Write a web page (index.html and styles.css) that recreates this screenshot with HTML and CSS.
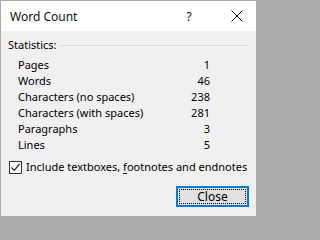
FILE: index.html
```html
<!DOCTYPE html>
<html>
<head>
<meta charset="utf-8">
<link rel="stylesheet" href="styles.css">
</head>
<body>
<div class="dialog">
  <div class="titlebar">
    <span class="title">Word Count</span>
    <span class="help">?</span>
    <span class="close-x">
      <svg width="12" height="12" viewBox="0 0 12 12"><path d="M0.5 0.5 L11.5 11.5 M11.5 0.5 L0.5 11.5" stroke="#111" stroke-width="1" fill="none"/></svg>
    </span>
  </div>
  <div class="content">
    <div class="section-head"><span>Statistics:</span><span class="rule"></span></div>
    <div class="stats">
      <div class="row"><span>Pages</span><span class="num">1</span></div>
      <div class="row"><span>Words</span><span class="num">46</span></div>
      <div class="row"><span>Characters (no spaces)</span><span class="num">238</span></div>
      <div class="row"><span>Characters (with spaces)</span><span class="num">281</span></div>
      <div class="row"><span>Paragraphs</span><span class="num">3</span></div>
      <div class="row"><span>Lines</span><span class="num">5</span></div>
    </div>
    <div class="check-row">
      <span class="checkbox"><svg width="11" height="11" viewBox="0 0 11 11"><path d="M1.5 5.5 L4.2 8.3 L9.5 2" stroke="#222" stroke-width="1.2" fill="none"/></svg></span>
      <span class="check-label">Include textboxes, <u>f</u>ootnotes and endnotes</span>
    </div>
    <div class="actions">
      <button class="btn"><span class="focus">Close</span></button>
    </div>
  </div>
</div>
</body>
</html>
```

FILE: styles.css
```css
html, body {
  margin: 0;
  padding: 0;
}
body {
  width: 258px;
  height: 218px;
  background: #aaaaaa;
  font-family: "Noto Sans", "Open Sans", sans-serif;
  font-size: 11px;
  color: #000;
  overflow: hidden;
}
.dialog {
  margin: 1px 2px 0 1px;
  height: 215px;
  display: flex;
  flex-direction: column;
  background: #f0f0f0;
}
.titlebar {
  height: 30px;
  background: #fff;
  display: flex;
  align-items: center;
  padding-left: 9px;
}
.title {
  flex: 1;
  font-size: 12px;
  color: #111;
}
.help {
  width: 12px;
  margin-right: 36px;
  text-align: center;
  font-size: 12px;
  color: #111;
}
.close-x {
  display: flex;
  margin-right: 13px;
}
.content {
  flex: 1;
  padding: 6px 7px 0 7px;
  display: flex;
  flex-direction: column;
}
.section-head {
  height: 16px;
  line-height: 16px;
  display: flex;
  align-items: center;
  white-space: nowrap;
}
.rule {
  flex: 1;
  height: 1px;
  background: #dcdcdc;
  margin-left: 3px;
}
.stats {
  margin-top: 4px;
  margin-left: 10px;
  width: 192px;
}
.row {
  height: 16px;
  line-height: 16px;
  display: flex;
  justify-content: space-between;
  white-space: nowrap;
}
.check-row {
  margin-top: 6px;
  height: 16px;
  display: flex;
  align-items: center;
  white-space: nowrap;
}
.checkbox {
  flex: none;
  width: 11px;
  height: 11px;
  border: 1px solid #333;
  background: #fff;
  display: flex;
  margin-left: 1px;
}
.check-label {
  margin-left: 4px;
  line-height: 16px;
}
.check-label u {
  text-underline-offset: 2px;
}
.actions {
  margin-top: 11px;
  display: flex;
  justify-content: flex-end;
}
.btn {
  width: 73px;
  height: 21px;
  border: 2px solid #0078d7;
  background: #e1e1e1;
  padding: 1px;
  margin: 0;
  font-family: inherit;
  font-size: 12px;
  color: #000;
  display: flex;
}
.focus {
  flex: 1;
  border: 1px dotted #000;
  display: flex;
  align-items: center;
  justify-content: center;
}
```
